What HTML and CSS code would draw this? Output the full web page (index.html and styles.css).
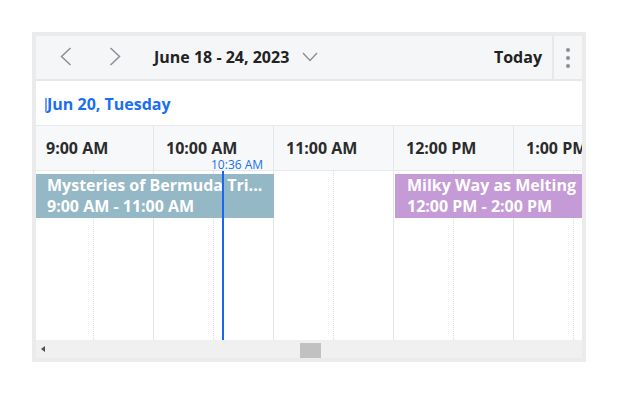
FILE: index.html
```html
<!DOCTYPE html>
<html>
<head>
<meta charset="utf-8">
<link rel="stylesheet" href="styles.css">
</head>
<body>
<div class="scheduler">
  <div class="toolbar">
    <button class="nav">
      <svg width="12" height="19" viewBox="0 0 12 19"><path d="M10.5 1 L1.5 9.5 L10.5 18" fill="none" stroke="#8c9096" stroke-width="1.5"/></svg>
    </button>
    <button class="nav next">
      <svg width="12" height="19" viewBox="0 0 12 19"><path d="M1.5 1 L10.5 9.5 L1.5 18" fill="none" stroke="#8c9096" stroke-width="1.5"/></svg>
    </button>
    <div class="range">June 18 - 24, 2023</div>
    <svg class="caret" width="16" height="10" viewBox="0 0 16 10"><path d="M1 1 L8 8.5 L15 1" fill="none" stroke="#8c9096" stroke-width="1.4"/></svg>
    <div class="spacer"></div>
    <div class="today">Today</div>
    <div class="more"><span></span><span></span><span></span></div>
  </div>
  <div class="dayrow"><span class="daylabel">Jun 20, Tuesday</span></div>
  <div class="timeline">
    <div class="track">
      <div class="hours">
        <div class="hour">9:00 AM</div>
        <div class="hour">10:00 AM</div>
        <div class="hour">11:00 AM</div>
        <div class="hour">12:00 PM</div>
        <div class="hour">1:00 PM</div>
      </div>
      <div class="grid">
        <div class="slot"></div><div class="slot"></div>
        <div class="slot"></div><div class="slot"></div>
        <div class="slot"></div><div class="slot"></div>
        <div class="slot"></div><div class="slot"></div>
        <div class="slot"></div><div class="slot"></div>
      </div>
      <div class="event ev-blue" style="left:1px;width:239px">
        <div class="ev-title">Mysteries of Bermuda Tri...</div>
        <div class="ev-time">9:00 AM - 11:00 AM</div>
      </div>
      <div class="event ev-purple" style="left:361px;width:240px">
        <div class="ev-title">Milky Way as Melting</div>
        <div class="ev-time">12:00 PM - 2:00 PM</div>
      </div>
      <div class="now-label" style="left:177px">10:36 AM</div>
      <div class="now-line" style="left:188px"></div>
    </div>
  </div>
  <div class="hscroll">
    <span class="arrow"></span>
    <span class="thumb"></span>
  </div>
</div>
</body>
</html>
```
FILE: styles.css
```css
* { box-sizing: border-box; }
html, body { margin: 0; padding: 0; background: #fff; }
body {
  padding: 32px 0 0 32px;
  font-family: "Open Sans", "Noto Sans", sans-serif;
}
.scheduler {
  width: 554px;
  height: 330px;
  border: 4px solid #ebebeb;
  display: flex;
  flex-direction: column;
  overflow: hidden;
  background: #fff;
}
.toolbar {
  height: 45px;
  flex: none;
  background: #f5f6f8;
  border-bottom: 2px solid #e6e8eb;
  display: flex;
  align-items: center;
  padding-left: 10px;
  padding-bottom: 2px;
}
.nav {
  width: 40px;
  height: 40px;
  border: 0;
  background: transparent;
  padding: 0;
  display: flex;
  align-items: center;
  justify-content: center;
}
.nav.next { margin-left: 9px; }
.range {
  margin-left: 19px;
  font-size: 16px;
  font-weight: 700;
  color: #222;
}
.caret { margin-left: 13px; margin-top: 1px; }
.spacer { flex: 1; }
.today {
  font-size: 16px;
  font-weight: 700;
  color: #222;
  padding-right: 10px;
}
.more {
  width: 30px;
  height: 43px;
  margin-bottom: -2px;
  border-left: 2px solid #e6e8eb;
  display: flex;
  flex-direction: column;
  align-items: center;
  justify-content: center;
  gap: 4px;
}
.more span {
  width: 4px;
  height: 4px;
  border-radius: 50%;
  background: #8a8f96;
}
.dayrow {
  height: 45px;
  flex: none;
  border-bottom: 1px solid #e6e8eb;
  display: flex;
  align-items: center;
  padding-left: 11px;
  padding-top: 1px;
}
.daylabel {
  position: relative;
  font-size: 16px;
  font-weight: 700;
  color: #1a6ff0;
}
.daylabel::before {
  content: "";
  position: absolute;
  left: -2px;
  top: 5px;
  width: 1.5px;
  height: 14px;
  background: #6c9ef2;
}
.timeline {
  flex: 1;
  overflow: hidden;
  position: relative;
}
.track {
  position: relative;
  margin-left: -2px;
  width: 600px;
  height: 100%;
  display: flex;
  flex-direction: column;
}
.hours {
  display: flex;
  height: 45px;
  flex: none;
  background: #f7f8fa;
  border-bottom: 1px solid #e6e8eb;
}
.hour {
  width: 120px;
  flex: none;
  border-right: 1px solid #e4e6ea;
  padding-left: 12px;
  display: flex;
  align-items: center;
  font-size: 16px;
  font-weight: 700;
  color: #2b2b2b;
}
.grid {
  flex: 1;
  display: flex;
}
.slot {
  width: 60px;
  flex: none;
  border-right: 1px dotted #dcdcdc;
}
.slot:nth-child(2n) {
  border-right: 1px solid #e4e6ea;
}
.event {
  position: absolute;
  top: 48px;
  height: 44px;
  padding: 1px 0 0 12px;
  color: #fff;
  font-size: 16px;
  font-weight: 700;
  line-height: 21px;
  white-space: nowrap;
  overflow: hidden;
}
.ev-blue { background: #95b8c6; }
.ev-purple { background: #c49bd6; }
.now-line {
  position: absolute;
  top: 45px;
  bottom: 0;
  width: 2px;
  background: #1a66f0;
}
.now-label {
  position: absolute;
  top: 33px;
  font-size: 12px;
  line-height: 12px;
  color: #1a6ff0;
  white-space: nowrap;
}
.hscroll {
  height: 18px;
  flex: none;
  background: #f0f0f0;
  position: relative;
}
.arrow {
  position: absolute;
  left: 5px;
  top: 6px;
  width: 0;
  height: 0;
  border-top: 3.5px solid transparent;
  border-bottom: 3.5px solid transparent;
  border-right: 4px solid #505050;
}
.thumb {
  position: absolute;
  left: 264px;
  top: 3px;
  width: 21px;
  height: 15px;
  background: #c1c1c1;
}
```
